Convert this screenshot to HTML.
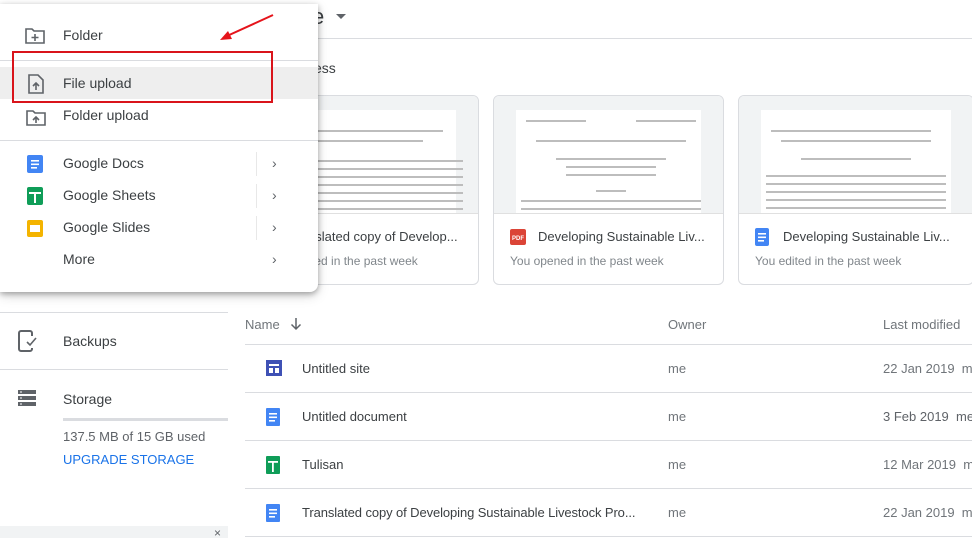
<!DOCTYPE html>
<html><head><meta charset="utf-8"><style>
*{margin:0;padding:0;box-sizing:border-box}
body{width:972px;height:538px;overflow:hidden;background:#fff;font-family:"Liberation Sans",Arial,sans-serif;position:relative;color:#3c4043}
.a{position:absolute}
.t{font-size:14px;color:#3c4043;white-space:nowrap}
.r{font-size:13px}
.g{color:#70757a}
.hl{background:#dadce0;height:1px}
.card{position:absolute;top:95px;height:190px;border:1px solid #dadce0;border-radius:6px;overflow:hidden;background:#fff}
.prev{position:absolute;left:0;right:0;top:0;height:118px;background:#f1f3f4;border-bottom:1px solid #e0e0e0}
.page{position:absolute;left:22px;right:22px;top:14px;bottom:0;background:#fff}
.ln{position:absolute;height:2px;background:#bdbdbd}
.ct{position:absolute;left:44px;top:133px;font-size:13px;color:#3c4043;white-space:nowrap}
.cs{position:absolute;left:16px;top:158px;font-size:12px;color:#80868b;white-space:nowrap}
.menu{position:absolute;left:0;top:4px;width:318px;height:288px;background:#fff;border-radius:0 0 8px 0;box-shadow:0 2px 6px rgba(0,0,0,.3),0 4px 12px rgba(0,0,0,.15)}
.mi{position:absolute;left:63px;font-size:14px;color:#3c4043;white-space:nowrap}
.chev{position:absolute;left:272px;font-size:14px;color:#5f6368}
.vd{position:absolute;left:256px;width:1px;height:24px;background:#e8e8e8}
</style></head><body>

<div class="a t" style="left:312px;top:4px;font-size:22px">e</div>
<div class="a" style="left:336px;top:14px;width:0;height:0;border-left:5px solid transparent;border-right:5px solid transparent;border-top:5px solid #5f6368"></div>
<div class="a hl" style="left:318px;top:38px;width:654px"></div>
<div class="a t" style="left:314px;top:60px;font-size:14px">ess</div>

<div class="card" style="left:250px;width:229px"><div class="prev"><div class="page">
<div class="ln" style="left:10px;top:20px;width:160px"></div><div class="ln" style="left:30px;top:30px;width:120px"></div><div class="ln" style="left:10px;top:50px;width:180px"></div><div class="ln" style="left:10px;top:58px;width:180px"></div><div class="ln" style="left:10px;top:66px;width:180px"></div><div class="ln" style="left:10px;top:74px;width:180px"></div><div class="ln" style="left:10px;top:82px;width:180px"></div><div class="ln" style="left:10px;top:90px;width:180px"></div><div class="ln" style="left:10px;top:98px;width:180px"></div></div></div>
<div class="ct" style="left:38px">Translated copy of Develop...</div><div class="cs" style="left:34px">Opened in the past week</div></div>

<div class="card" style="left:493px;width:231px"><div class="prev"><div class="page">
<div class="ln" style="left:10px;top:10px;width:60px"></div><div class="ln" style="left:120px;top:10px;width:60px"></div><div class="ln" style="left:20px;top:30px;width:150px"></div><div class="ln" style="left:40px;top:48px;width:110px"></div><div class="ln" style="left:50px;top:56px;width:90px"></div><div class="ln" style="left:50px;top:64px;width:90px"></div><div class="ln" style="left:80px;top:80px;width:30px"></div><div class="ln" style="left:5px;top:90px;width:180px"></div><div class="ln" style="left:5px;top:98px;width:180px"></div></div></div>
<svg class="a" style="left:16px;top:133px" width="16" height="16"><rect width="16" height="16" rx="2" fill="#db4437"/><text x="2" y="11" font-size="6" fill="#fff" font-family="Liberation Sans" font-weight="bold">PDF</text></svg>
<div class="ct">Developing Sustainable Liv...</div><div class="cs">You opened in the past week</div></div>

<div class="card" style="left:738px;width:236px"><div class="prev"><div class="page">
<div class="ln" style="left:10px;top:20px;width:160px"></div><div class="ln" style="left:20px;top:30px;width:150px"></div><div class="ln" style="left:40px;top:48px;width:110px"></div><div class="ln" style="left:5px;top:65px;width:180px"></div><div class="ln" style="left:5px;top:73px;width:180px"></div><div class="ln" style="left:5px;top:81px;width:180px"></div><div class="ln" style="left:5px;top:89px;width:180px"></div><div class="ln" style="left:5px;top:97px;width:180px"></div></div></div>
<svg class="a" style="left:16px;top:132px" width="14" height="18"><rect width="14" height="18" rx="2" fill="#4285f4"/><rect x="3" y="5" width="8" height="1.6" fill="#fff"/><rect x="3" y="8.5" width="8" height="1.6" fill="#fff"/><rect x="3" y="12" width="6" height="1.6" fill="#fff"/></svg>
<div class="ct">Developing Sustainable Liv...</div><div class="cs">You edited in the past week</div></div>

<!-- list -->
<div class="a t g" style="left:245px;top:317px;font-size:13px">Name</div>
<svg class="a" style="left:290px;top:317px" width="12" height="14"><path d="M6 1v11M1.5 7.5L6 12l4.5-4.5" stroke="#5f6368" stroke-width="1.5" fill="none"/></svg>
<div class="a t g" style="left:668px;top:317px;font-size:13px">Owner</div>
<div class="a t g" style="left:883px;top:317px;font-size:13px">Last modified</div>
<div class="a hl" style="left:245px;top:344px;width:727px"></div>

<svg class="a" style="left:266px;top:360px" width="16" height="16"><rect width="16" height="16" fill="#3f51b5"/><rect x="3" y="4" width="10" height="2" fill="#fff"/><rect x="3" y="8" width="4" height="5" fill="#fff"/><rect x="9" y="8" width="4" height="5" fill="#fff"/></svg>
<div class="a t r" style="left:302px;top:361px">Untitled site</div><div class="a t g" style="left:668px;top:361px;font-size:13px">me</div><div class="a t g" style="left:883px;top:361px;font-size:13px">22 Jan 2019 &nbsp;me</div>
<div class="a hl" style="left:245px;top:392px;width:727px"></div>

<svg class="a" style="left:266px;top:408px" width="14" height="18"><rect width="14" height="18" rx="1" fill="#4285f4"/><rect x="3" y="5" width="8" height="1.6" fill="#fff"/><rect x="3" y="8.5" width="8" height="1.6" fill="#fff"/><rect x="3" y="12" width="6" height="1.6" fill="#fff"/></svg>
<div class="a t r" style="left:302px;top:409px">Untitled document</div><div class="a t g" style="left:668px;top:409px;font-size:13px">me</div><div class="a t" style="left:883px;top:409px;font-size:13px;color:#5f6368">3 Feb 2019 &nbsp;me</div>
<div class="a hl" style="left:245px;top:440px;width:727px"></div>

<svg class="a" style="left:266px;top:456px" width="14" height="18"><rect width="14" height="18" rx="1" fill="#0f9d58"/><rect x="2" y="5" width="10" height="1.8" fill="#fff"/><rect x="6" y="5" width="1.8" height="11" fill="#fff"/></svg>
<div class="a t r" style="left:302px;top:457px">Tulisan</div><div class="a t g" style="left:668px;top:457px;font-size:13px">me</div><div class="a t g" style="left:883px;top:457px;font-size:13px">12 Mar 2019 &nbsp;me</div>
<div class="a hl" style="left:245px;top:488px;width:727px"></div>

<svg class="a" style="left:266px;top:504px" width="14" height="18"><rect width="14" height="18" rx="1" fill="#4285f4"/><rect x="3" y="5" width="8" height="1.6" fill="#fff"/><rect x="3" y="8.5" width="8" height="1.6" fill="#fff"/><rect x="3" y="12" width="6" height="1.6" fill="#fff"/></svg>
<div class="a t r" style="left:302px;top:505px;letter-spacing:-0.1px">Translated copy of Developing Sustainable Livestock Pro...</div><div class="a t g" style="left:668px;top:505px;font-size:13px">me</div><div class="a t g" style="left:883px;top:505px;font-size:13px">22 Jan 2019 &nbsp;me</div>
<div class="a hl" style="left:245px;top:536px;width:727px"></div>

<!-- sidebar -->
<div class="a hl" style="left:0;top:312px;width:228px"></div>
<svg class="a" style="left:18px;top:330px" width="20" height="22"><rect x="1" y="1" width="13" height="20" rx="2" fill="none" stroke="#5f6368" stroke-width="2"/><rect x="10" y="6" width="8" height="12" fill="#fff"/><path d="M9 12l3 3 6-7" stroke="#5f6368" stroke-width="1.6" fill="none"/></svg>
<div class="a t" style="left:63px;top:333px">Backups</div>
<div class="a hl" style="left:0;top:369px;width:228px"></div>
<svg class="a" style="left:18px;top:390px" width="18" height="16"><rect y="0" width="18" height="4" fill="#5f6368"/><rect y="6" width="18" height="4" fill="#5f6368"/><rect y="12" width="18" height="4" fill="#5f6368"/><rect x="2" y="1.5" width="2" height="1" fill="#fff"/><rect x="2" y="7.5" width="2" height="1" fill="#fff"/><rect x="2" y="13.5" width="2" height="1" fill="#fff"/></svg>
<div class="a t" style="left:63px;top:391px">Storage</div>
<div class="a" style="left:63px;top:418px;width:165px;height:3px;background:#dadce0"></div>
<div class="a t" style="left:63px;top:429px;font-size:13px;color:#5f6368">137.5 MB of 15 GB used</div>
<div class="a t" style="left:63px;top:452px;font-size:13px;color:#1a73e8">UPGRADE STORAGE</div>
<div class="a" style="left:0;top:526px;width:228px;height:12px;background:#f1f3f4"></div>
<div class="a" style="left:214px;top:526px;font-size:12px;color:#5f6368">×</div>

<!-- menu -->
<div class="menu">
<svg class="a" style="left:25px;top:23px" width="20" height="17"><path d="M1 2h6l2 2h10v12H1z" fill="none" stroke="#5f6368" stroke-width="1.6"/><path d="M10 7v7M6.5 10.5h7" stroke="#5f6368" stroke-width="1.6"/></svg>
<div class="mi" style="top:23px">Folder</div>
<div class="a hl" style="left:0;top:56px;width:318px"></div>
<div class="a" style="left:0;top:63px;width:318px;height:32px;background:#eeeeee"></div>
<svg class="a" style="left:28px;top:70px" width="16" height="20"><path d="M1 1h9l5 5v13H1z" fill="none" stroke="#5f6368" stroke-width="1.6"/><path d="M8 16v-7M5 12l3-3 3 3" stroke="#5f6368" stroke-width="1.6" fill="none"/></svg>
<div class="mi" style="top:71px">File upload</div>
<svg class="a" style="left:26px;top:105px" width="20" height="17"><path d="M1 2h6l2 2h10v12H1z" fill="none" stroke="#5f6368" stroke-width="1.6"/><path d="M10 14V8M7 11l3-3 3 3" stroke="#5f6368" stroke-width="1.6" fill="none"/></svg>
<div class="mi" style="top:103px">Folder upload</div>
<div class="a hl" style="left:0;top:136px;width:318px"></div>
<svg class="a" style="left:27px;top:151px" width="16" height="18"><rect width="16" height="18" rx="2" fill="#4285f4"/><rect x="4" y="5" width="8" height="1.6" fill="#fff"/><rect x="4" y="8.5" width="8" height="1.6" fill="#fff"/><rect x="4" y="12" width="6" height="1.6" fill="#fff"/></svg>
<div class="mi" style="top:151px">Google Docs</div><div class="vd" style="top:148px"></div><div class="chev" style="top:151px">›</div>
<svg class="a" style="left:27px;top:183px" width="16" height="18"><rect width="16" height="18" rx="2" fill="#0f9d58"/><rect x="2" y="5" width="12" height="2" fill="#fff"/><rect x="7" y="5" width="2" height="11" fill="#fff"/></svg>
<div class="mi" style="top:183px">Google Sheets</div><div class="vd" style="top:180px"></div><div class="chev" style="top:183px">›</div>
<svg class="a" style="left:27px;top:216px" width="16" height="17"><rect width="16" height="17" rx="2" fill="#f4b400"/><rect x="3" y="5" width="10" height="7" fill="#fff"/></svg>
<div class="mi" style="top:215px">Google Slides</div><div class="vd" style="top:212px"></div><div class="chev" style="top:215px">›</div>
<div class="mi" style="top:247px">More</div><div class="chev" style="top:247px">›</div>
</div>

<div class="a" style="left:12px;top:51px;width:261px;height:52px;border:2px solid #d9141b"></div>
<svg class="a" style="left:215px;top:12px" width="62" height="32"><path d="M58 3L12 24" stroke="#e5141b" stroke-width="2"/><path d="M5 28l12-1-4-8z" fill="#e5141b"/></svg>
</body></html>
